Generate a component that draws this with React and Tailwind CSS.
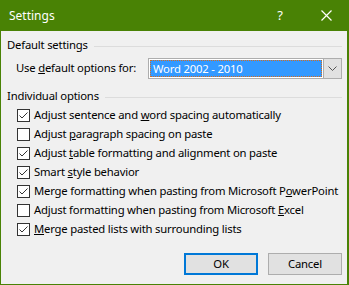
import React, { useState } from 'react';

const options = [
  { pre: 'Adjust sentence and ', key: 'w', post: 'ord spacing automatically', checked: true },
  { pre: 'Adjust ', key: 'p', post: 'aragraph spacing on paste', checked: false },
  { pre: 'Adjust ', key: 't', post: 'able formatting and alignment on paste', checked: true },
  { pre: 'Smart ', key: 's', post: 'tyle behavior', checked: true },
  { pre: 'Merge formatting when pasting from Microsoft P', key: 'o', post: 'werPoint', checked: true },
  { pre: 'Adjust formatting when pasting from Microsoft ', key: 'E', post: 'xcel', checked: false },
  { pre: '', key: 'M', post: 'erge pasted lists with surrounding lists', checked: true },
];

const GroupLabel = ({ children }) => (
  <div className="flex items-center h-[16px]">
    <span className="whitespace-nowrap">{children}</span>
    <div className="flex-1 h-px bg-[#dcdcdc] ml-[6px] mt-[2px]" />
  </div>
);

const CheckBox = ({ checked }) => (
  <div className="w-[13px] h-[13px] border border-[#333333] bg-white flex items-center justify-center shrink-0">
    {checked && (
      <svg width="11" height="11" viewBox="0 0 11 11">
        <path d="M1.5 5.5 L4 8 L9.5 2.5" fill="none" stroke="#333333" strokeWidth="1" />
      </svg>
    )}
  </div>
);

const App = () => {
  const [checks, setChecks] = useState(options.map((o) => o.checked));

  const toggle = (i) => setChecks((c) => c.map((v, j) => (j === i ? !v : v)));

  return (
    <div className="w-[349px] h-[285px] bg-[#498205] flex flex-col font-['Noto_Sans',sans-serif] text-[11.3px] tracking-[-0.2px] text-black overflow-hidden">
      {/* title bar */}
      <div className="h-[31px] flex items-center text-white shrink-0">
        <span className="ml-[9px] flex-1 text-[12px] tracking-normal">Settings</span>
        <span className="w-[46px] text-center text-[13px]">?</span>
        <div className="w-[46px] flex justify-center">
          <svg width="11" height="11" viewBox="0 0 11 11">
            <path d="M0.5 0.5 L10.5 10.5 M10.5 0.5 L0.5 10.5" stroke="white" strokeWidth="1.2" />
          </svg>
        </div>
      </div>

      <div className="flex-1 bg-[#f0f0f0] ml-px mr-[2px] mb-px pl-[6px] pr-[5px] pt-[6px] flex flex-col">
        <GroupLabel>Default settings</GroupLabel>

        <div className="flex items-center mt-[5px] h-[21px]">
          <span className="ml-[9px] w-[132px] whitespace-nowrap shrink-0">
            Use <span className="underline">d</span>efault options for:
          </span>
          <div className="flex-1 h-[21px] border border-[#adadad] bg-white flex">
            <div className="flex-1 m-px bg-[#3399ff] border border-dotted border-[#d86c1a] text-white flex items-center pl-[2px] leading-none">
              Word 2002 - 2010
            </div>
            <div className="w-[18px] bg-[#e1e1e1] border-l border-[#adadad] flex items-center justify-center">
              <svg width="9" height="6" viewBox="0 0 9 6">
                <path d="M0.5 0.5 L4.5 4.5 L8.5 0.5" fill="none" stroke="#555555" strokeWidth="1" />
              </svg>
            </div>
          </div>
        </div>

        <div className="mt-[9px]">
          <GroupLabel>Individual options</GroupLabel>
        </div>

        <div className="flex flex-col mt-[2px] ml-[10px]">
          {options.map((o, i) => (
            <div key={i} className="h-[19px] flex items-center cursor-default" onClick={() => toggle(i)}>
              <CheckBox checked={checks[i]} />
              <span className="ml-[4px] whitespace-nowrap">
                {o.pre}
                <span className="underline">{o.key}</span>
                {o.post}
              </span>
            </div>
          ))}
        </div>

        <div className="flex justify-end gap-[10px] mt-[14px]">
          <button className="w-[74px] h-[22px] bg-[#e1e1e1] border-2 border-[#0078d7]">OK</button>
          <button className="w-[74px] h-[22px] bg-[#e1e1e1] border border-[#adadad]">Cancel</button>
        </div>
      </div>
    </div>
  );
};

export default App;
